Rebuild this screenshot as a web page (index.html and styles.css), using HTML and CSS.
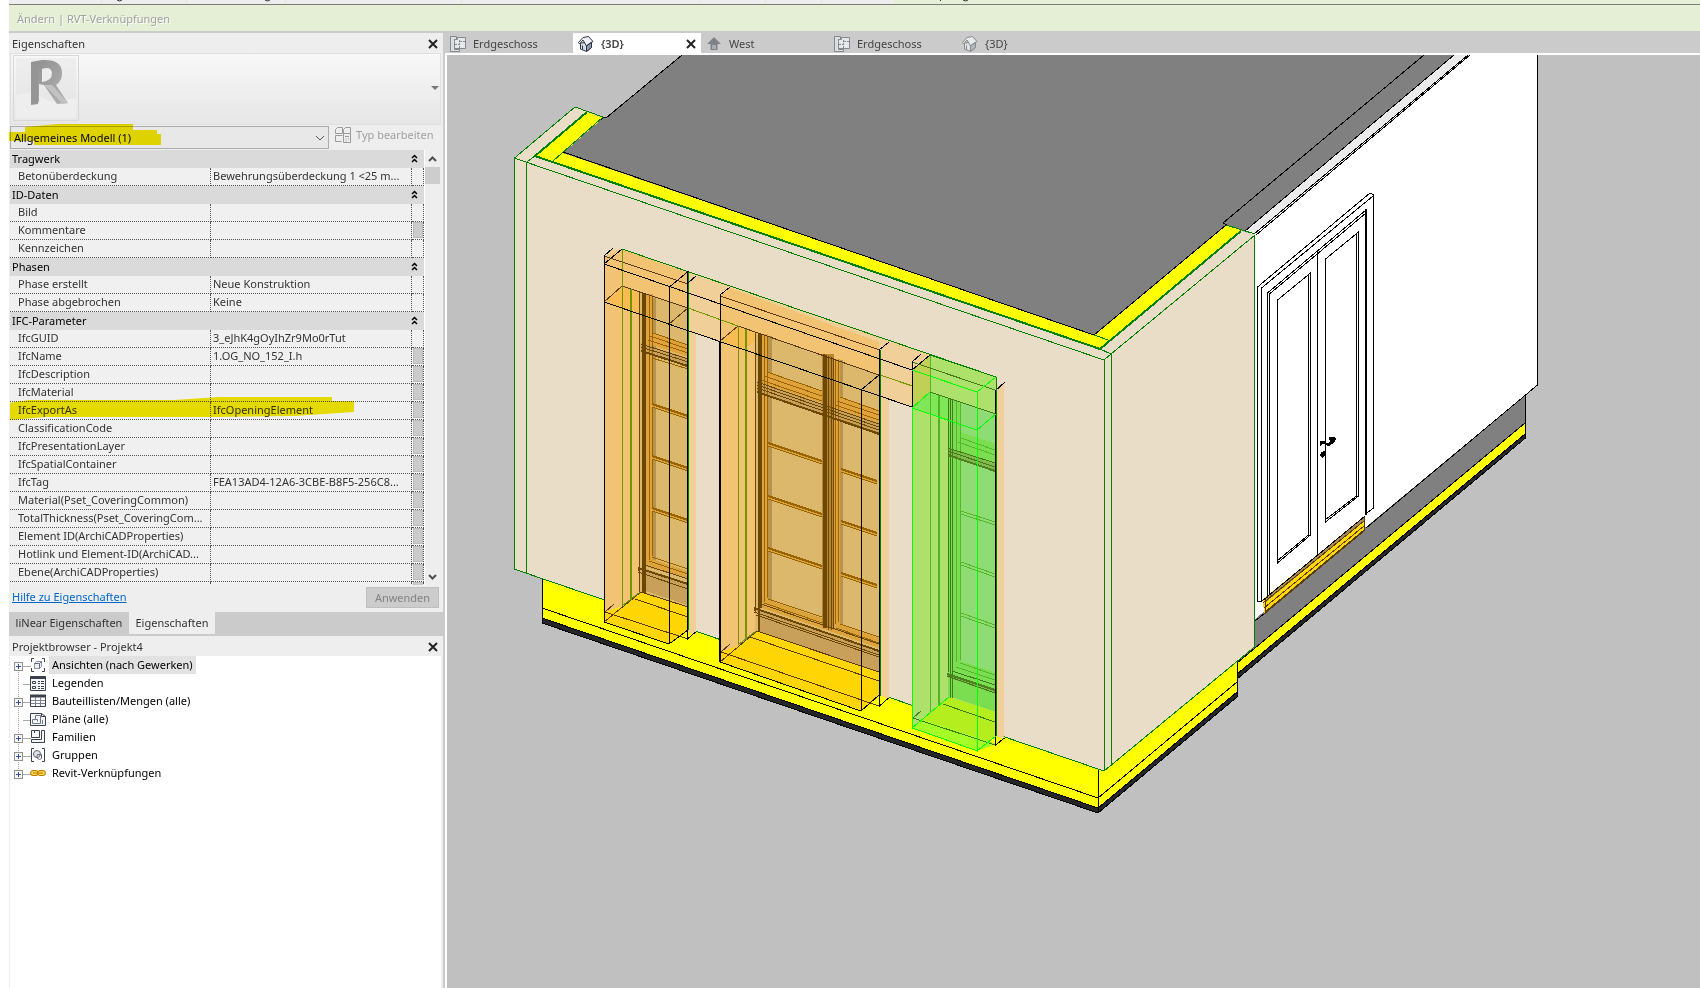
FILE: index.html
```html
<!DOCTYPE html>
<html lang="de">
<head>
  <meta charset="UTF-8" />
  <meta name="viewport" content="width=device-width, initial-scale=1.0"/>
  <title>Projekt4 - {3D}</title>
  <link rel="stylesheet" href="styles.css">
</head>
<body>

  <div class="ribbon">
    <svg width="1000" height="4" viewBox="0 0 1000 4"><path d="M92.500 0v4M177.500 0v4M276.500 0v4M452.500 0v4M690.500 0v4M756.500 0v4M812.500 0v4" stroke="#e0ecd0"/><path d="M108 0q3 2 5 0M256 0q3 2 5 0M954 0q3 2 5 0M931.500 0v1" fill="none" stroke="#333" stroke-width="1"/></svg>
  </div>
  <div class="context-bar">Ändern | RVT-Verknüpfungen</div>

  <div class="workspace">
    <aside class="sidebar">

      <!-- Properties -->
      <section class="properties">
        <div class="panel-title">
          <span>Eigenschaften</span>
          <button class="close" aria-label="Schließen"><svg width="10" height="10" viewBox="0 0 10 10"><path d="M1 1l8 8M9 1l-8 8"/></svg></button>
        </div>

        <div class="type-preview">
          <div class="type-thumb">
            <svg width="60" height="60" viewBox="0 0 60 60">
              <defs>
                <linearGradient id="rg" x1="0" x2="1" y1="0" y2="1"><stop offset="0" stop-color="#8f8f8f"/><stop offset="1" stop-color="#b4b4b4"/></linearGradient>
                <linearGradient id="bg" x1="0" x2="0" y1="0" y2="1"><stop offset="0" stop-color="#eee"/><stop offset="1" stop-color="#e4e4e4"/></linearGradient>
              </defs>
              <path d="M0 0h60v60H0z" fill="url(#bg)"/>
              <path d="M0 37l16-3 20 10 24-4v20H0z" fill="#eee"/>
              <path d="M15 4l11-2q20-1 20 13 0 8-6 12l12 18-11 1-13-19-5-1v18l-8 2z" fill="url(#rg)"/>
              <path d="M15 4l7 4v38l-7 1z" fill="#959595"/>
              <path d="M26 11q9-3 10 4 0 8-10 9z" fill="#ededed"/>
              <path d="M28 27l8 0 16 18-5 1z" fill="#c2c2c2"/>
            </svg>
          </div>
          <button class="type-drop" aria-label="Typ wählen"><svg width="8" height="4" viewBox="0 0 8 4"><path d="M0 0h8l-4 4z" fill="#777"/></svg></button>
        </div>

        <div class="filter-row">
          <select class="filter" aria-label="Kategorie"><option>Allgemeines Modell (1)</option></select>
          <svg class="chevron" width="10" height="6" viewBox="0 0 10 6"><path d="M1 1l4 4 4-4" fill="none" stroke="#555"/></svg>
          <svg class="marker filter-marker" width="152" height="24" viewBox="0 0 152 24"><path d="M16 4L50 1h74v6h24v4h4v11H25v-4H0V9h16z"/></svg>
          <button class="edit-type" disabled>
            <svg width="16" height="16" viewBox="0 0 16 16" fill="none" stroke="#9b9b9b"><path d="M8.500 6.500v-4l2-2h5v6M.5 6.500v-4l2-2h5v6M.5 6.500h7M8.500 6.500h7M.5 8.500v6h6M.5 8.500h7"/><path d="M8.500 6.500h7v9h-7zM10 9.500h4M10.500 12h1M13 12h1M10.500 14h1"/></svg>
            Typ bearbeiten
          </button>
        </div>

        <div class="grid-wrap">
          <table class="grid">
            <colgroup><col class="col-name"><col><col class="col-btn"></colgroup>
            <tbody>
              <tr class="group"><th colspan="2">Tragwerk</th><td><button class="fold" aria-label="Einklappen"><svg viewBox="0 0 7 9"><path d="M1 4l2.500-2.500L6 4M1 8l2.500-2.500L6 8"/></svg></button></td></tr>
              <tr><td>Betonüberdeckung</td><td>Bewehrungsüberdeckung 1 &lt;25 m...</td><td></td></tr>
              <tr class="group"><th colspan="2">ID-Daten</th><td><button class="fold" aria-label="Einklappen"><svg viewBox="0 0 7 9"><path d="M1 4l2.500-2.500L6 4M1 8l2.500-2.500L6 8"/></svg></button></td></tr>
              <tr><td>Bild</td><td></td><td></td></tr>
              <tr><td>Kommentare</td><td></td><td><button class="assoc" aria-label="Zuordnen"></button></td></tr>
              <tr><td>Kennzeichen</td><td></td><td></td></tr>
              <tr class="group"><th colspan="2">Phasen</th><td><button class="fold" aria-label="Einklappen"><svg viewBox="0 0 7 9"><path d="M1 4l2.500-2.500L6 4M1 8l2.500-2.500L6 8"/></svg></button></td></tr>
              <tr><td>Phase erstellt</td><td>Neue Konstruktion</td><td></td></tr>
              <tr><td>Phase abgebrochen</td><td>Keine</td><td></td></tr>
              <tr class="group"><th colspan="2">IFC-Parameter</th><td><button class="fold" aria-label="Einklappen"><svg viewBox="0 0 7 9"><path d="M1 4l2.500-2.500L6 4M1 8l2.500-2.500L6 8"/></svg></button></td></tr>
              <tr><td>IfcGUID</td><td>3_eJhK4gOyIhZr9Mo0rTut</td><td></td></tr>
              <tr><td>IfcName</td><td>1.OG_NO_152_I.h</td><td><button class="assoc" aria-label="Zuordnen"></button></td></tr>
              <tr><td>IfcDescription</td><td></td><td><button class="assoc" aria-label="Zuordnen"></button></td></tr>
              <tr><td>IfcMaterial</td><td></td><td><button class="assoc" aria-label="Zuordnen"></button></td></tr>
              <tr class="marked"><td>IfcExportAs<svg class="marker row-marker" width="345" height="25" viewBox="0 0 345 25"><path d="M0 7l20-3h145l45-3h113v4h22v11l-60 4-85 1H36L0 24z"/></svg></td><td>IfcOpeningElement</td><td><button class="assoc" aria-label="Zuordnen"></button></td></tr>
              <tr><td>ClassificationCode</td><td></td><td><button class="assoc" aria-label="Zuordnen"></button></td></tr>
              <tr><td>IfcPresentationLayer</td><td></td><td><button class="assoc" aria-label="Zuordnen"></button></td></tr>
              <tr><td>IfcSpatialContainer</td><td></td><td><button class="assoc" aria-label="Zuordnen"></button></td></tr>
              <tr><td>IfcTag</td><td>FEA13AD4-12A6-3CBE-B8F5-256C8...</td><td><button class="assoc" aria-label="Zuordnen"></button></td></tr>
              <tr><td>Material(Pset_CoveringCommon)</td><td></td><td><button class="assoc" aria-label="Zuordnen"></button></td></tr>
              <tr><td>TotalThickness(Pset_CoveringCom...</td><td></td><td><button class="assoc" aria-label="Zuordnen"></button></td></tr>
              <tr><td>Element ID(ArchiCADProperties)</td><td></td><td><button class="assoc" aria-label="Zuordnen"></button></td></tr>
              <tr><td>Hotlink und Element-ID(ArchiCAD...</td><td></td><td><button class="assoc" aria-label="Zuordnen"></button></td></tr>
              <tr><td>Ebene(ArchiCADProperties)</td><td></td><td><button class="assoc" aria-label="Zuordnen"></button></td></tr>
              <tr><td></td><td></td><td><button class="assoc" aria-label="Zuordnen"></button></td></tr>
            </tbody>
          </table>
          <div class="scrollbar">
            <button aria-label="Nach oben"><svg width="9" height="6" viewBox="0 0 9 6"><path d="M1 5l3.500-3.500L8 5"/></svg></button>
            <div class="thumb"></div>
            <button class="down" aria-label="Nach unten"><svg width="9" height="6" viewBox="0 0 9 6"><path d="M1 1l3.500 3.500L8 1"/></svg></button>
          </div>
        </div>

        <div class="grid-footer">
          <a href="#">Hilfe zu Eigenschaften</a>
          <button class="apply" disabled>Anwenden</button>
        </div>
      </section>

      <div class="panel-tabs">
        <button>liNear Eigenschaften</button>
        <button class="active">Eigenschaften</button>
      </div>

      <!-- Project browser -->
      <section class="browser">
        <div class="panel-title">
          <span>Projektbrowser - Projekt4</span>
          <button class="close" aria-label="Schließen"><svg width="10" height="10" viewBox="0 0 10 10"><path d="M1 1l8 8M9 1l-8 8"/></svg></button>
        </div>
        <ul class="tree">
          <li><button class="plus" aria-label="Aufklappen"></button>
            <svg class="ico" viewBox="0 0 16 16"><path d="M4 1.500H1.500V5M12 1.500h2.500V5M4 14.500H1.500V11M12 14.500h2.500V11"/><path d="M4.500 6.500l2-2h5v5l-2 2h-5z" stroke="#8a94a3" fill="#edf0f4"/><path d="M4.500 6.500h5v5M9.500 6.500l2-2" stroke="#667"/></svg>
            <span class="selected">Ansichten (nach Gewerken)</span></li>
          <li><i class="leaf"></i>
            <svg class="ico" viewBox="0 0 16 16"><path d="M.5 1.500h15v14H.5z" fill="#f4f6f8"/><path d="M.5 2.500h15" stroke-width="3"/><path d="M2.500 6.500h3v2h-3zM2.500 11.500h3v2h-3zM8 6.500h2M11 6.500h3M8 8.500h2M11 8.500h3M8 11.500h2M11 11.500h3M8 13.500h2M11 13.500h3"/></svg>
            <span>Legenden</span></li>
          <li><button class="plus" aria-label="Aufklappen"></button>
            <svg class="ico" viewBox="0 0 16 16"><path d="M.5 2.500h15v11H.5z" fill="#fff"/><path d="M0 3h16" stroke-width="3"/><path d="M1 7.500h14M1 10.500h14M5.500 4v9M10.500 4v9" stroke="#7b8492"/></svg>
            <span>Bauteillisten/Mengen (alle)</span></li>
          <li><i class="leaf"></i>
            <svg class="ico" viewBox="0 0 16 16"><path d="M.5 2.500h11l4 3v9H.5z" fill="#f4f6f8"/><path d="M11.500 2.500v3h4"/><path d="M2.500 8.500h3v-4h5v8h-8zM5.500 8.500h2v2M12.500 9v4" stroke="#6d7786"/></svg>
            <span>Pläne (alle)</span></li>
          <li><button class="plus" aria-label="Aufklappen"></button>
            <svg class="ico" viewBox="0 0 16 16"><path d="M1.500 1.500h8v7h-8zM4.500 4v-2.500M11.500 1.500h3v12h-13v-3h10z" fill="#f4f6f8"/></svg>
            <span>Familien</span></li>
          <li><button class="plus" aria-label="Aufklappen"></button>
            <svg class="ico" viewBox="0 0 16 16"><path d="M4 1.500H1.500v13H4M12 1.500h2.500v13H12"/><circle cx="7" cy="7" r="3.500" fill="#dfe4ea" stroke="#667"/><path d="M7.500 7.500h4v4l-2 1-3-2z" fill="none" stroke="#667"/></svg>
            <span>Gruppen</span></li>
          <li><button class="plus" aria-label="Aufklappen"></button>
            <svg class="ico" viewBox="0 0 16 16"><g stroke="#b87a00" fill="#ffd34d"><rect x=".5" y="5.500" width="8" height="5" rx="2.500"/><rect x="7.500" y="5.500" width="8" height="5" rx="2.500"/></g><path d="M3 8h3M10 8h3M6 8h4" stroke="#b87a00" stroke-width="1"/></svg>
            <span>Revit-Verknüpfungen</span></li>
        </ul>
      </section>
    </aside>

    <main class="main">
      <nav class="view-tabs">
        <button><svg class="vico" viewBox="0 0 16 16"><path d="M.5 .5h6v3h-2v10h5v2h-9z" fill="#dcdfe2"/><path d="M4.500 3.500h3v-2h8v11h-11z" fill="#e6e8ea"/><path d="M9.500 4v8M5 8.500h4M10 5.500h5" stroke-dasharray="2 1"/></svg>Erdgeschoss</button>
        <button class="active"><svg class="vico dark" viewBox="0 0 16 16"><path d="M2.500 7v6l6 2.500 5-4V6z" fill="#d5dde6"/><path d="M.5 6.500L5 1.500l5.500-1 4.500 5-4.500 2.500-2 2L5 4l-3.500 4z" fill="#eef2f6"/><path d="M8.500 10l5-3.500v5l-5 4z" fill="#8a9aad"/><path d="M4.500 9.500v4" /></svg><b>{3D}</b><svg class="tab-close" width="10" height="10" viewBox="0 0 10 10"><path d="M1 1l8 8M9 1l-8 8"/></svg></button>
        <button><svg class="vico" viewBox="0 0 16 16"><path d="M8 1l7 7h-3.500v6h-7V8H1z" fill="#7e8286" stroke="none"/><path d="M6 9h4v4H6z" fill="#a9adb1" stroke="none"/></svg>West</button>
        <button><svg class="vico" viewBox="0 0 16 16"><path d="M.5 .5h6v3h-2v10h5v2h-9z" fill="#dcdfe2"/><path d="M4.500 3.500h3v-2h8v11h-11z" fill="#e6e8ea"/><path d="M9.500 4v8M5 8.500h4M10 5.500h5" stroke-dasharray="2 1"/></svg>Erdgeschoss</button>
        <button><svg class="vico" viewBox="0 0 16 16"><path d="M2.500 7v6l6 2.500 5-4V6z" fill="#dfe1e3"/><path d="M.5 6.500L5 1.500l5.500-1 4.500 5-4.500 2.500-2 2L5 4l-3.500 4z" fill="#e8eaec"/><path d="M8.500 10l5-3.500v5l-5 4z" fill="#b5b9bd"/><path d="M4.500 9.500v4" /></svg>{3D}</button>
      </nav>

      <div class="viewport">
        <svg class="model" viewBox="447 55 1253 933" preserveAspectRatio="xMinYMin slice" role="img" aria-label="3D-Ansicht">
          <defs>
            <g id="bar-s"><path d="M0 -1l36 12v4L0 3z" fill="#dca33a" stroke="none"/><path d="M0 0l36 12" stroke-width="2"/><path d="M0 3l36 12"/></g>
            <g id="bar-l"><path d="M0 -1l54 18v4L0 3z" fill="#dca33a" stroke="none"/><path d="M0 0l54 18" stroke-width="2"/><path d="M0 3l54 18"/></g>
          </defs>

          <!-- roof -->
          <path class="roof" d="M606 117L682 55H1454L1245 231L1226 225L1094 335L563 153L602 118z"/>
          <path class="k" d="M682 55L606 118l-4 -1M1424 55L1223 223l4 2"/>

          <!-- rear wing: wall and plinth -->
          <path d="M1454 55h16L1255 235l-10-4z" fill="#ebebeb"/>
          <path d="M1470 55h67v330L1255 621V235z" fill="#fff"/>
          <path d="M1525 395v29L1237 664v-30z" fill="#808080"/>
          <path class="y" d="M1525 423v12L1237 675v-12z"/>
          <path d="M1525 434v5L1237 679v-5z" fill="#262626"/>
          <path class="k" d="M1454 55L1245 231M1468 55L1254 234M1470 55L1256 235M1537.500 55V385L1366 528M1255 621l10-8M1525.500 395v43L1237 679M1525 423L1237 663M1525 434L1237 674"/>

          <!-- door -->
          <path d="M1263 599l101-82v14l-100 83z" fill="#ffd900"/>
          <path d="M1266 598l98-81v4l-98 81z" fill="#a88a50"/>
          <path d="M1263 603l101-82M1264 608l100-82M1265 612l99-82M1264 614l100-83M1265 598v16M1364 517v14" stroke="#5a3b00" fill="none"/>
          <path class="k" d="M1257.500 601V287L1370 193l3.500 2V508l-8 6M1261.500 601V288L1373 196M1257 601h5l5-4M1267.500 598V293L1366 210M1269.500 595V294L1366 213M1317.500 252V555M1268 596l97-80M1277.500 563V300l33-27V535zM1308.500 274V535L1277 561M1325.500 522V259l33-27V496zM1356.500 234V496L1325 520"/>
          <path d="M1366 209V515" stroke="#000" stroke-width="2"/>
          <path d="M1320 441h5v4l4 1 5-3 2-4-2-2h-5v3l2 1-3 2-5 1-3 2zM1321 452l4-1v4l-3 3-2-2z" fill="#000"/>

          <!-- plinth of the front building -->
          <path class="y" d="M542 576L1100 768L1237 655V692L1098 808L542 618z"/>
          <path d="M542 618L1098 808L1237 692v5L1098 813L542 623z" fill="#262626"/>
          <path class="k" d="M542 618L1098 808L1237 692M542 623L1098 813L1237 697M542 608L1098 798L1237 682M1098.500 770V813M1237.500 661V697M542.500 578V623"/>

          <!-- walls -->
          <path class="wall" d="M514 158l61-51 12 5L535 156L1100 350l141-119 14 4V647L1111 766l-7 5L514 569z"/>
          <path class="y" d="M587 112l16 6L563 153L1094 335L1226 225l15 5L1100 350L535 156z"/>
          <path class="k" d="M603 118l-4 3M563 152L1094 335L1226 225"/>
          <path class="g" d="M514.500 569V158L575 107l28 10L553 161M526.500 573V162M514 158L1104 360L1111 354L1255 235M527 162l8-6M1104.500 360V771M1111.500 354V766M1254.500 235V647L1104 771L514 569M1094 335l17 6M1100 349l11 5M1226 225l29 9"/>
          <path class="g thick" d="M587 112L535 156L1100 349L1241 231"/>

          <!-- opening fills -->
          <path d="M604 257l9-8h9L930 355l-18 15v37L604 302z" fill="#f1cf98"/>
          <path d="M688 275l8 3V635l-8-3zM879 345l10-3V699l-10-4zM995 385l9-1V739l-9-3z" fill="#f1cf98"/>
          <path d="M604 257l18-8 66 24V630l-66-24-18 6zM720 296l10-8 149 54V696L738 646l-18 8z" fill="#f3c374"/>
          <path d="M604 302l18-16 66 22-19 16zM720 341l18-15 26 8-20 15z" fill="#f9bc52"/>
          <path d="M604 622v-10l18-5 19-15 47 15v24l-19 13zM720 662v-10l18-6 19-15 122 41v25l-18 14z" fill="#ffd503"/>

          <!-- window 1 -->
          <path d="M639 292l49 16V606L639 592z" fill="#dcb86d"/>
          <path d="M653 298h3V560h-3z" fill="#b8934d"/>
          <path d="M646 294h7V565h-7zM653 333l35 12v12l-41-14z" fill="#dfa339"/>
          <path d="M641 343l47 15v8l-47-15zM641 567l47 16v22l-43-14v-20z" fill="#c9a05a"/>
          <path d="M648 558l40 13v8l-44-13z" fill="#dca33a"/>
          <g class="b">
            <path d="M649.500 296V560M652.500 297V556M653 333l35 12M650 336l38 13M648 340l40 13M647 352l41 15M652 358l36 11M652 557l36 12M649 561l39 13"/>
            <use href="#bar-s" x="652" y="404"/><use href="#bar-s" x="652" y="456"/><use href="#bar-s" x="652" y="508"/>
          </g>
          <path class="d" d="M639.500 292V593M641 344l47 15M641 347l47 15M638 567v4M645 565l43 14"/>
          <path class="d thick" d="M643 293V593M645 294V593M641 351l47 15M638 568l50 16"/>
          <path class="d" d="M638 572l50 17"/>

          <!-- window 2 -->
          <path d="M755 332l124 43V672L755 631z" fill="#dcb86d"/>
          <path d="M768 336h4V603h-4zM839 360h4V626h-4z" fill="#b8934d"/>
          <path d="M761 334h7V603h-7zM834 359h6V628h-6zM767 372l55 19v12l-62-21zM840 397l39 13v14l-47-16z" fill="#dfa339"/>
          <path d="M757 381l122 42v10L757 391zM756 608l123 42v22l-121-41v-18z" fill="#c9a05a"/>
          <path d="M766 599l113 39v10l-119-41z" fill="#dca33a"/>
          <path d="M822 354h12V630l-12-4z" fill="#b9852c"/>
          <g class="b">
            <path d="M764.500 335V602M767.500 336V598M835.500 359V624M838.500 360V622M767 372l55 19M764 376l58 20M761 380l61 21M840 397l39 14M837 401l42 14M835 405l44 15M764 394l58 20M838 419l41 14M768 599l54 18M764 603l58 20M840 624l39 13M836 628l43 15"/>
            <use href="#bar-l" x="768" y="443"/><use href="#bar-l" x="768" y="496"/><use href="#bar-l" x="768" y="548"/>
            <use href="#bar-s" x="841" y="469"/><use href="#bar-s" x="841" y="521"/><use href="#bar-s" x="841" y="573"/>
          </g>
          <path class="d" d="M755.500 332V612M757 382l122 42M757 385l122 42M757 388l122 42M828.500 356V630M831.500 357V630M833.500 358V628M756 615l123 42M758 603l121 41M754 607v4"/>
          <path class="d thick" d="M759 333V632M761 334V608M757 392l122 42M824 354V628M826 355V628M754 608l125 43"/>
          <path class="d" d="M754 612l125 43"/>

          <!-- opening outlines -->
          <path class="br" d="M604 256l84 28M622 286l66 22M604 302l18-16M669 324l19-16M720 296l160 54M738 326l141 49M720 341l18-15M604 622l37-30 47 15M635 599l53 18M605 612l83 27M605 612l9-8M720 662l37-31 122 41M750 637l129 44M721 652l158 54M721 652l9-8"/>
          <path class="o" d="M622.500 249V606M738.500 326V645M688 308l50 18M880 375l50 17M622 606l18-14M738 645l18-14"/>
          <path class="o" d="M631 289V600M746 329V640" stroke-width="2"/>
          <path class="g" d="M622 249L996 377M688.500 272V630M880.500 350V696"/>

          <!-- selected opening -->
          <path d="M912 370l18-15 66 22V736l-19 15-65-23z" fill="#aee06c"/>
          <path d="M912 370l18-15v37l-18 15z" fill="#bfd055"/>
          <path d="M912 408l18-16 66 22-19 16z" fill="#80e758"/>
          <path d="M948 398l48 16V712l-44-15h-4z" fill="#7ade50"/>
          <path d="M961 402l35 12v30l-35-12zM961 452l35 20V673l-35-12z" fill="#8fdc74"/>
          <path d="M912 728l37-31 47 15v24l-19 15z" fill="#b4ee1e"/>
          <path d="M912 728l10-9 74 25-19 7z" fill="#a5fe26"/>
          <path d="M948 448l47 16v8l-47-16zM947 673l49 17v4l-49-17z" fill="#83b94c"/>
          <path d="M930.500 355V712M956.500 400V662M960.500 402V660M961 438l34 12M958 442l37 13M961 511l34 11M961 514l34 11M961 562l34 12M961 565l34 12M961 613l34 12M961 616l34 12M960 663l35 12M956 667l39 13" stroke="#55b62c" fill="none"/>
          <path d="M939 395V705" stroke="#4db520" stroke-width="2"/>
          <path d="M948.500 398V672M950.500 399V698M952.500 399V698M948 448l47 15M948 451l47 16M947 676l48 17M952 671l43 14M912 362l83 28M930 392l66 22M943 704l52 18M913 718l82 27M913 718l8-7" stroke="#3f7d1b" fill="none"/>
          <path d="M948 455l47 16M947 674l48 16" stroke="#4d8020" stroke-width="2"/>
          <path class="k" d="M604.500 256V622M604 256l9-8M604 264L912 370v37L604 302M604 264l18-15M669.500 644V287l19-16M604 622l65 22 19-14M687.500 271V639l8-7M688 283l8-7M720.500 295V662M719.500 342V662M720 295l10-8M861.500 390V711M720 662l141 49 18-16M861 390l18-15M879.500 350V706l9-8M879 350l10-8M912 370l18-15M912.500 362v8M912 362l9-8M995 391l10-9M995.500 391V745l9-7"/>
          <path class="g" d="M930 355l66 22V736"/>
          <path class="sel" d="M912 370l65 22 19-15M912.500 408V728l65 23V392M912 408l65 22 19-16M912 408l18-16M912 728l37-31M977 751l19-15"/>
        </svg>
      </div>
    </main>
  </div>

</body>
</html>
```

FILE: styles.css
```css
* {
  box-sizing: border-box;
}

body {
  font-family: 'Noto Sans', 'Open Sans', sans-serif;
  font-size: 11px;
  line-height: 18px;
  color: #333;
  background: #fff;
  margin: 0;
  padding-left: 9px;
  height: 100vh;
  display: flex;
  flex-direction: column;
  overflow: hidden;
}

button {
  font: inherit;
  color: inherit;
  background: none;
  border: none;
  padding: 0;
}

svg {
  display: block;
}

/* top */
.ribbon {
  height: 5px;
  background: linear-gradient(to right, #ededed 885px, #e5efd6 885px);
  border-bottom: 1px solid #7d7d7d;
  overflow: hidden;
}

.context-bar {
  height: 26px;
  padding: 5px 8px;
  background: #e5efd6;
  color: #a0a0a0;
  text-shadow: 1px 1px 0 #fff;
}

.workspace {
  flex: 1;
  display: flex;
  min-height: 0;
  background: #cbcbcb;
}

/* left side */
.sidebar {
  flex: 0 0 434px;
  padding-top: 2px;
  display: flex;
  flex-direction: column;
}

.properties, .browser {
  background: #eee;
  padding: 0 2px 0 1px;
}

.panel-title {
  height: 20px;
  padding: 1px 3px 0 2px;
  display: flex;
  justify-content: space-between;
  align-items: center;
}

.close svg, .tab-close {
  fill: none;
  stroke: #222;
  stroke-width: 2;
}

.type-preview {
  height: 72px;
  padding: 0 1px 2px 2px;
  display: flex;
  justify-content: space-between;
  align-items: center;
  border: 1px solid #e0e0e0;
  background: linear-gradient(#f8f8f8, #e6e6e6);
}

.type-thumb {
  border: 1px solid #d8d8d8;
  padding: 2px;
}

.filter-row {
  position: relative;
  display: flex;
  align-items: flex-start;
  gap: 6px;
  height: 25px;
  padding: 1px 0;
}

.filter {
  appearance: none;
  width: 319px;
  height: 23px;
  padding: 0 3px;
  border: 1px solid #acacac;
  border-radius: 0;
  background: #e8e8e8;
  color: #000;
  font: inherit;
}

.chevron {
  position: absolute;
  left: 305px;
  top: 10px;
}

.marker {
  position: absolute;
  fill: #f4e800;
  mix-blend-mode: multiply;
  pointer-events: none;
}

.filter-marker {
  left: -1px;
  top: -2px;
}

.edit-type {
  display: flex;
  align-items: center;
  gap: 5px;
  color: #a0a0a0;
}

.grid-wrap {
  display: flex;
  align-items: flex-start;
  height: 435px;
  overflow: hidden;
}

.grid {
  width: 414px;
  flex: none;
  table-layout: fixed;
  border-collapse: separate;
  border-spacing: 0;
  background: #f0f0f0;
}

.col-name {
  width: 201px;
}

.col-btn {
  width: 12px;
}

.grid tr {
  height: 18px;
}

.grid td, .grid th {
  height: 18px;
  line-height: 16px;
  padding: 0 0 0 2px;
  text-align: left;
  vertical-align: top;
  font-weight: normal;
  white-space: nowrap;
}

.grid th {
  line-height: 18px;
}

.grid td {
  border-right: 1px dotted #555;
  border-bottom: 1px dotted #555;
}

.grid td:first-child {
  padding-left: 8px;
}

.grid td:last-child {
  padding: 0 0 0 1px;
}

.grid .group th, .grid .group td {
  background: #dadada;
  color: #000;
  border: none;
}

.fold {
  display: block;
  margin: 4px 0 0 -2px;
}

.fold svg {
  width: 7px;
  height: 9px;
  fill: none;
  stroke: #000;
  stroke-width: 1.500;
}

.assoc {
  display: block;
  width: 10px;
  height: 16px;
  background: #cbcbcb;
  border: 1px solid #bcbcbc;
}

.marked td:first-child {
  position: relative;
}

.row-marker {
  left: -1px;
  top: -6px;
}

.scrollbar {
  width: 16px;
  height: 100%;
  border-left: 1px solid #fff;
  display: flex;
  flex-direction: column;
}

.scrollbar button {
  height: 17px;
  padding-left: 3px;
}

.scrollbar .down {
  margin-top: auto;
}

.scrollbar svg {
  fill: none;
  stroke: #505050;
  stroke-width: 2;
}

.thumb {
  height: 17px;
  background: #cdcdcd;
}

.grid-footer {
  height: 27px;
  padding: 2px 2px 4px 2px;
  display: flex;
  justify-content: space-between;
  align-items: center;
}

.grid-footer a {
  color: #0066cc;
  line-height: 20px;
  height: 21px;
}

.apply {
  width: 73px;
  height: 21px;
  background: #cccccc;
  border: 1px solid #bfbfbf;
  color: #838383;
}

.panel-tabs {
  height: 24px;
  display: flex;
}

.panel-tabs button {
  height: 22px;
  width: 120px;
  white-space: nowrap;
}

.panel-tabs .active {
  width: 86px;
  background: #eee;
}

.browser {
  flex: 1;
  display: flex;
  flex-direction: column;
}

.tree {
  flex: 1;
  margin: 0;
  padding: 0 0 0 4px;
  list-style: none;
  background: #fff;
  color: #000;
}

.tree li {
  height: 18px;
  display: flex;
  align-items: center;
  background: linear-gradient(#aaa, #aaa) 9px 10px / 8px 1px no-repeat, repeating-linear-gradient(#aaa 0 1px, #fff 1px 2px) 4px 0 / 1px 18px no-repeat;
}

.tree li:first-child {
  background-position: 9px 10px, 4px 10px;
}

.tree li:last-child {
  background-size: 8px 1px, 1px 10px;
}

.plus, .leaf {
  width: 9px;
  height: 9px;
  margin: 2px 7px 0 0;
}

.plus {
  border: 1px solid #919191;
  background: linear-gradient(#3b4fa0, #3b4fa0) center / 5px 1px no-repeat, linear-gradient(#3b4fa0, #3b4fa0) center / 1px 5px no-repeat, #f6f6f6;
}

.ico {
  width: 16px;
  height: 16px;
  margin-right: 3px;
  fill: none;
  stroke: #3a424e;
}

.tree span {
  padding: 0 3px;
}

.tree .selected {
  background: #e2e2e2;
}

/* views */
.main {
  flex: 1;
  min-width: 0;
  padding-left: 2px;
  display: flex;
  flex-direction: column;
}

.view-tabs {
  height: 22px;
  padding-top: 2px;
  display: flex;
}

.view-tabs button {
  width: 128px;
  height: 20px;
  padding: 1px 5px 0;
  display: flex;
  align-items: center;
  gap: 7px;
  color: #444;
}

.view-tabs .active {
  background: #fff;
}

.view-tabs b {
  font-weight: 600;
}

.vico {
  width: 16px;
  height: 16px;
  fill: none;
  stroke: #85898d;
}

.vico.dark {
  stroke: #2c3440;
}

.tab-close {
  margin-left: auto;
}

.viewport {
  flex: 1;
  min-height: 0;
  border-top: 2px solid #fff;
  border-left: 2px solid #fff;
  background: #c0c0c0;
}

.model {
  width: 100%;
  height: 100%;
  shape-rendering: crispEdges;
}

.model .roof {
  fill: #808080;
}

.model .wall {
  fill: #eaddc8;
}

.model .y {
  fill: #ffff00;
}

.model .k, .model .g, .model .b, .model .d, .model .br, .model .o, .model .sel {
  fill: none;
  stroke: #000;
}

.model .g {
  stroke: #008000;
}

.model .thick {
  stroke-width: 2;
}

.model .b {
  stroke: #996300;
}

.model .d {
  stroke: #6b4700;
}

.model .br {
  stroke: #5a3a0a;
}

.model .o {
  stroke: #739600;
}

.model .sel {
  stroke: #00ff00;
}
```
